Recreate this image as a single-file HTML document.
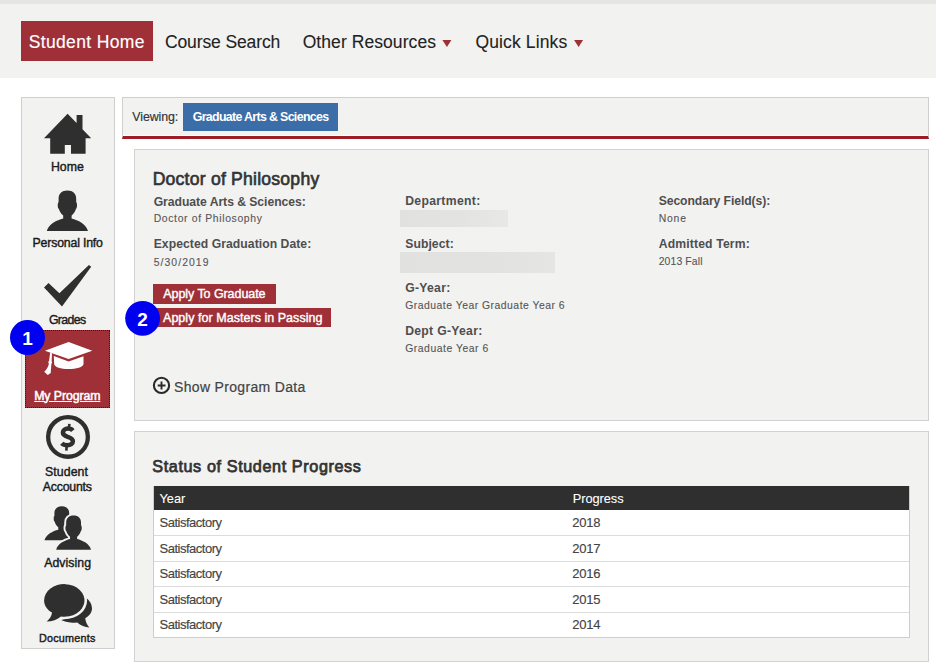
<!DOCTYPE html>
<html><head><meta charset="utf-8">
<style>
html,body{margin:0;padding:0;background:#fff;}
body{width:936px;height:668px;overflow:hidden;position:relative;font-family:"Liberation Sans",sans-serif;}
.b{position:absolute;box-sizing:border-box;}
.t{position:absolute;white-space:nowrap;}
svg{position:absolute;left:0;top:0;}
</style></head><body>
<div class="b" style="left:0;top:0;width:936px;height:4px;background:#e5e5e3"></div>
<div class="b" style="left:0;top:4px;width:936px;height:74px;background:#f2f2f1"></div>
<div class="b" style="left:21px;top:21px;width:132px;height:40px;background:#a03038"></div>

<div class="b" style="left:21px;top:97px;width:94px;height:552px;background:#f2f2f1;border:1px solid #cfcfcf"></div>
<div class="b" style="left:25px;top:330px;width:85px;height:78px;background:#a03038;outline:1px dotted #222;outline-offset:-1px"></div>

<div class="b" style="left:122px;top:97px;width:807px;height:42px;background:#f2f2f1;border:1px solid #cfcfcf;border-bottom:3px solid #9e1c26;box-shadow:inset 0 -1px 0 #fff"></div>
<div class="b" style="left:183px;top:103px;width:155px;height:28px;background:#3b6ea8"></div>

<div class="b" style="left:134px;top:149px;width:795px;height:272px;background:#f2f2f1;border:1px solid #d2d2d2"></div>
<div class="b" style="left:400px;top:210px;width:108px;height:17px;background:linear-gradient(to right,#e1e1e0,#e3e3e2 55%,#e8e8e6)"></div>
<div class="b" style="left:400px;top:252px;width:155px;height:21px;background:linear-gradient(to right,#e1e1e0,#e2e2e1 60%,#e5e5e3)"></div>
<div class="b" style="left:153px;top:284px;width:123px;height:20px;background:#a03038"></div>
<div class="b" style="left:153px;top:308px;width:178px;height:19px;background:#a03038"></div>

<div class="b" style="left:134px;top:431px;width:795px;height:231px;background:#f2f2f1;border:1px solid #d2d2d2"></div>
<div class="b" style="left:153px;top:486px;width:757px;height:152px;background:#fff;border:1px solid #cdcdcd;border-top:0"></div>
<div class="b" style="left:154px;top:486px;width:755px;height:24px;background:#2f2f2f"></div>
<div class="b" style="left:154px;top:535px;width:755px;height:1px;background:#dcdcdc"></div>
<div class="b" style="left:154px;top:561px;width:755px;height:1px;background:#dcdcdc"></div>
<div class="b" style="left:154px;top:586px;width:755px;height:1px;background:#dcdcdc"></div>
<div class="b" style="left:154px;top:612px;width:755px;height:1px;background:#dcdcdc"></div>

<svg width="936" height="668" viewBox="0 0 936 668">
<defs>
<path id="person" d="M0,0 C-5.6,0 -8.8,3.2 -8.8,8.2 L-8.8,11.6 C-9.9,11.8 -10,17.6 -8.6,18.2 C-8,20.5 -6.5,23.2 -4.2,25 L-4.2,27.8 C-10.5,29.3 -19,33.5 -20.6,40.4 L20.6,40.4 C19,33.5 10.5,29.3 4.2,27.8 L4.2,25 C6.5,23.2 8,20.5 8.6,18.2 C10,17.6 9.9,11.8 8.8,11.6 L8.8,8.2 C8.8,3.2 5.6,0 0,0 Z"/>
</defs>
<!-- nav triangles -->
<path d="M442.4,40 H451.4 L446.9,47 Z" fill="#a03038"/>
<path d="M574.1,40 H583.1 L578.6,47 Z" fill="#a03038"/>
<!-- home -->
<path d="M44,138.3 L67.6,113.8 L76.6,123.1 V115.1 H82.5 V129.2 L91.2,138.3 H85.6 V153.8 H71 V144.9 H64.8 V153.8 H50.2 V138.3 Z" fill="#2f2f2f"/>
<!-- person -->
<use href="#person" transform="translate(67.4,190.6)" fill="#2f2f2f"/>
<!-- check -->
<path d="M44,287.6 L48.5,283.1 L59.4,293.2 L88.9,265.1 L91.2,266.8 L62,306.6 Z" fill="#2f2f2f"/>
<!-- grad cap -->
<path d="M44.9,350.8 L68.6,341.9 L92.3,350.8 L68.6,359 Z" fill="#fff"/>
<path d="M53.8,355.9 L68.6,361.4 L83.5,356.3 V364 C83.5,367 76,369 68.6,369 C61,369 54.2,367 54.2,364 Z" fill="#fff"/>
<path d="M50.2,352.5 L52,353.5 L51.6,361 C52.2,361.8 52.2,363 51.5,363.6 L51.2,366 L50.7,373 L47.8,374.9 L44.2,371.8 C46.5,369.5 47.8,367.5 48.4,365.5 L48.9,363.7 C48.1,363 48.2,361.6 49,361 Z" fill="#fff"/>
<!-- dollar -->
<circle cx="68" cy="436.9" r="19.85" fill="none" stroke="#2f2f2f" stroke-width="4.3"/>
<path d="M72.8,430.6 C71.5,429 69.5,428.6 68,428.6 C65,428.6 62.9,430.3 62.9,432.6 C62.9,435 65.2,436 67.7,436.8 C70.5,437.6 72.9,438.8 72.9,441.3 C72.9,443.8 70.5,445.2 67.4,445.2 C65,445.2 63,444.5 61.8,443.2" fill="none" stroke="#2f2f2f" stroke-width="4.5"/>
<path d="M69.4,423.8 L68.8,428.8 M66.8,445 L66.3,450.7" stroke="#2f2f2f" stroke-width="2.6"/>
<!-- advising -->
<use href="#person" transform="translate(61.8,506.3) scale(0.84)" fill="#2f2f2f"/>
<use href="#person" transform="translate(73.6,515.6) scale(0.845)" fill="#f2f2f1" stroke="#f2f2f1" stroke-width="4.6"/>
<use href="#person" transform="translate(73.6,515.6) scale(0.845)" fill="#2f2f2f"/>
<!-- documents -->
<path d="M53,608.3 A19.5,14.4 0 0 1 92,608.3 C92,612.5 89.5,615.8 85.2,618.2 C85.6,621.8 87,625 89.4,627.5 C85,627.2 80.5,625.3 77.2,622.4 C75.5,622.6 74,622.7 72.5,622.7 A19.5,14.4 0 0 1 53,608.3 Z" fill="#2f2f2f"/>
<path d="M41.5,600.4 A22.8,18.9 0 1 1 64.3,619.3 C59,620.5 55,622.5 44.5,624 C48.5,620 49.3,616.5 49.6,614.5 C44.5,611.2 41.5,606 41.5,600.4 Z" fill="#f2f2f1"/>
<path d="M44.1,600.4 A20.2,16.3 0 1 1 61,616.5 C57.5,619.5 52,621.5 46.7,621.5 C49.5,619.3 51.8,616 52,612.6 C47,609.6 44.1,605.3 44.1,600.4 Z" fill="#2f2f2f"/>
<!-- blue circles -->
<circle cx="27.5" cy="337.5" r="17.5" fill="#0000f0"/>
<circle cx="142.6" cy="318.3" r="17.4" fill="#0000f0"/>
<text x="27.6" y="344.6" font-family="Liberation Sans" font-weight="bold" font-size="19" text-anchor="middle" fill="#fff">1</text>
<text x="142.6" y="325.6" font-family="Liberation Sans" font-weight="bold" font-size="19" text-anchor="middle" fill="#fff">2</text>
<!-- plus circle -->
<circle cx="161.5" cy="385.4" r="7.6" fill="none" stroke="#2a2a2a" stroke-width="2.1"/>
<path d="M157.7,385.5 H165.5 M161.5,381.5 V389.5" stroke="#2a2a2a" stroke-width="1.9"/>
</svg>
<div class="t" id="t0" style="left:28.70px;top:33.98px;font-size:17.5px;line-height:17.5px;font-weight:normal;color:#fff;letter-spacing:0.351px;-webkit-text-stroke:0.15px #fff;">Student Home</div>
<div class="t" id="t1" style="left:165.00px;top:34.08px;font-size:17.5px;line-height:17.5px;font-weight:normal;color:#222;letter-spacing:-0.124px;-webkit-text-stroke:0.1px #222;">Course Search</div>
<div class="t" id="t2" style="left:302.70px;top:33.68px;font-size:17.5px;line-height:17.5px;font-weight:normal;color:#222;letter-spacing:0.070px;-webkit-text-stroke:0.1px #222;">Other Resources</div>
<div class="t" id="t3" style="left:475.40px;top:34.08px;font-size:17.5px;line-height:17.5px;font-weight:normal;color:#222;letter-spacing:0.130px;-webkit-text-stroke:0.1px #222;">Quick Links</div>
<div class="t" id="t4" style="left:132.30px;top:111.40px;font-size:12.4px;line-height:12.4px;font-weight:normal;color:#333;letter-spacing:-0.095px;-webkit-text-stroke:0.15px #333;">Viewing:</div>
<div class="t" id="t5" style="left:192.70px;top:111.40px;font-size:12.4px;line-height:12.4px;font-weight:bold;color:#fff;letter-spacing:-0.665px;">Graduate Arts &amp; Sciences</div>
<div class="t" id="t6" style="left:50.90px;top:161.29px;font-size:12.3px;line-height:12.3px;font-weight:normal;color:#1a1a1a;letter-spacing:0.012px;-webkit-text-stroke:0.4px #1a1a1a;">Home</div>
<div class="t" id="t7" style="left:32.60px;top:237.39px;font-size:12.3px;line-height:12.3px;font-weight:normal;color:#1a1a1a;letter-spacing:-0.177px;-webkit-text-stroke:0.4px #1a1a1a;">Personal Info</div>
<div class="t" id="t8" style="left:48.90px;top:314.49px;font-size:12.3px;line-height:12.3px;font-weight:normal;color:#1a1a1a;letter-spacing:-0.635px;-webkit-text-stroke:0.4px #1a1a1a;">Grades</div>
<div class="t" id="t9" style="left:45.00px;top:465.59px;font-size:12.3px;line-height:12.3px;font-weight:normal;color:#1a1a1a;letter-spacing:0.088px;-webkit-text-stroke:0.4px #1a1a1a;">Student</div>
<div class="t" id="t10" style="left:42.80px;top:481.19px;font-size:12.3px;line-height:12.3px;font-weight:normal;color:#1a1a1a;letter-spacing:-0.205px;-webkit-text-stroke:0.4px #1a1a1a;">Accounts</div>
<div class="t" id="t11" style="left:44.20px;top:557.39px;font-size:12.3px;line-height:12.3px;font-weight:normal;color:#1a1a1a;letter-spacing:0.051px;-webkit-text-stroke:0.4px #1a1a1a;">Advising</div>
<div class="t" id="t12" style="left:34.20px;top:389.59px;font-size:12.3px;line-height:12.3px;font-weight:normal;color:#fff;letter-spacing:-0.080px;-webkit-text-stroke:0.5px #fff;text-decoration:underline;">My Program</div>
<div class="t" id="t13" style="left:39.00px;top:633.46px;font-size:10.8px;line-height:10.8px;font-weight:normal;color:#1a1a1a;letter-spacing:0.224px;-webkit-text-stroke:0.4px #1a1a1a;">Documents</div>
<div class="t" id="t14" style="left:152.65px;top:171.30px;font-size:17.6px;line-height:17.6px;font-weight:normal;color:#333;letter-spacing:0.221px;-webkit-text-stroke:0.65px #333;">Doctor of Philosophy</div>
<div class="t" id="t15" style="left:153.70px;top:196.47px;font-size:12.2px;line-height:12.2px;font-weight:bold;color:#4e4e4e;letter-spacing:-0.050px;">Graduate Arts &amp; Sciences:</div>
<div class="t" id="t16" style="left:153.70px;top:237.97px;font-size:12.2px;line-height:12.2px;font-weight:bold;color:#4e4e4e;letter-spacing:0.047px;">Expected Graduation Date:</div>
<div class="t" id="t17" style="left:405.20px;top:194.67px;font-size:12.2px;line-height:12.2px;font-weight:bold;color:#4e4e4e;letter-spacing:0.328px;">Department:</div>
<div class="t" id="t18" style="left:405.20px;top:237.67px;font-size:12.2px;line-height:12.2px;font-weight:bold;color:#4e4e4e;letter-spacing:0.069px;">Subject:</div>
<div class="t" id="t19" style="left:405.20px;top:282.17px;font-size:12.2px;line-height:12.2px;font-weight:bold;color:#4e4e4e;letter-spacing:0.284px;">G-Year:</div>
<div class="t" id="t20" style="left:405.20px;top:324.67px;font-size:12.2px;line-height:12.2px;font-weight:bold;color:#4e4e4e;letter-spacing:0.294px;">Dept G-Year:</div>
<div class="t" id="t21" style="left:658.70px;top:194.67px;font-size:12.2px;line-height:12.2px;font-weight:bold;color:#4e4e4e;letter-spacing:-0.085px;">Secondary Field(s):</div>
<div class="t" id="t22" style="left:658.70px;top:237.67px;font-size:12.2px;line-height:12.2px;font-weight:bold;color:#4e4e4e;letter-spacing:0.147px;">Admitted Term:</div>
<div class="t" id="t23" style="left:153.70px;top:213.59px;font-size:10.4px;line-height:10.4px;font-weight:normal;color:#555;letter-spacing:0.648px;-webkit-text-stroke:0.1px #555;">Doctor of Philosophy</div>
<div class="t" id="t24" style="left:153.70px;top:257.79px;font-size:10.4px;line-height:10.4px;font-weight:normal;color:#555;letter-spacing:1.069px;-webkit-text-stroke:0.1px #555;">5/30/2019</div>
<div class="t" id="t25" style="left:405.20px;top:300.79px;font-size:10.4px;line-height:10.4px;font-weight:normal;color:#555;letter-spacing:0.494px;-webkit-text-stroke:0.1px #555;">Graduate Year Graduate Year 6</div>
<div class="t" id="t26" style="left:405.20px;top:344.09px;font-size:10.4px;line-height:10.4px;font-weight:normal;color:#555;letter-spacing:0.529px;-webkit-text-stroke:0.1px #555;">Graduate Year 6</div>
<div class="t" id="t27" style="left:658.70px;top:213.89px;font-size:10.4px;line-height:10.4px;font-weight:normal;color:#555;letter-spacing:0.813px;-webkit-text-stroke:0.1px #555;">None</div>
<div class="t" id="t28" style="left:658.70px;top:257.19px;font-size:10.4px;line-height:10.4px;font-weight:normal;color:#555;letter-spacing:0.133px;-webkit-text-stroke:0.1px #555;">2013 Fall</div>
<div class="t" id="t29" style="left:163.30px;top:288.12px;font-size:12.5px;line-height:12.5px;font-weight:normal;color:#fff;letter-spacing:-0.068px;-webkit-text-stroke:0.4px #fff;">Apply To Graduate</div>
<div class="t" id="t30" style="left:163.00px;top:311.92px;font-size:12.5px;line-height:12.5px;font-weight:normal;color:#fff;letter-spacing:0.039px;-webkit-text-stroke:0.4px #fff;">Apply for Masters in Passing</div>
<div class="t" id="t31" style="left:174.00px;top:379.85px;font-size:14px;line-height:14px;font-weight:normal;color:#444;letter-spacing:0.327px;-webkit-text-stroke:0.2px #444;">Show Program Data</div>
<div class="t" id="t32" style="left:152.30px;top:457.88px;font-size:16.2px;line-height:16.2px;font-weight:normal;color:#333;letter-spacing:0.605px;-webkit-text-stroke:0.75px #333;">Status of Student Progress</div>
<div class="t" id="t33" style="left:159.50px;top:493.26px;font-size:12.8px;line-height:12.8px;font-weight:normal;color:#fff;letter-spacing:0.000px;-webkit-text-stroke:0.1px #fff;">Year</div>
<div class="t" id="t34" style="left:572.70px;top:493.46px;font-size:12.8px;line-height:12.8px;font-weight:normal;color:#fff;letter-spacing:-0.044px;-webkit-text-stroke:0.1px #fff;">Progress</div>
<div class="t" id="t35" style="left:159.50px;top:515.69px;font-size:13px;line-height:13px;font-weight:normal;color:#444;letter-spacing:-0.492px;-webkit-text-stroke:0.15px #444;">Satisfactory</div>
<div class="t" id="t36" style="left:572.20px;top:515.69px;font-size:13px;line-height:13px;font-weight:normal;color:#444;letter-spacing:-0.230px;-webkit-text-stroke:0.15px #444;">2018</div>
<div class="t" id="t37" style="left:159.50px;top:542.09px;font-size:13px;line-height:13px;font-weight:normal;color:#444;letter-spacing:-0.492px;-webkit-text-stroke:0.15px #444;">Satisfactory</div>
<div class="t" id="t38" style="left:572.20px;top:542.09px;font-size:13px;line-height:13px;font-weight:normal;color:#444;letter-spacing:-0.230px;-webkit-text-stroke:0.15px #444;">2017</div>
<div class="t" id="t39" style="left:159.50px;top:566.59px;font-size:13px;line-height:13px;font-weight:normal;color:#444;letter-spacing:-0.492px;-webkit-text-stroke:0.15px #444;">Satisfactory</div>
<div class="t" id="t40" style="left:572.20px;top:566.59px;font-size:13px;line-height:13px;font-weight:normal;color:#444;letter-spacing:-0.230px;-webkit-text-stroke:0.15px #444;">2016</div>
<div class="t" id="t41" style="left:159.50px;top:593.09px;font-size:13px;line-height:13px;font-weight:normal;color:#444;letter-spacing:-0.492px;-webkit-text-stroke:0.15px #444;">Satisfactory</div>
<div class="t" id="t42" style="left:572.20px;top:593.09px;font-size:13px;line-height:13px;font-weight:normal;color:#444;letter-spacing:-0.230px;-webkit-text-stroke:0.15px #444;">2015</div>
<div class="t" id="t43" style="left:159.50px;top:617.59px;font-size:13px;line-height:13px;font-weight:normal;color:#444;letter-spacing:-0.492px;-webkit-text-stroke:0.15px #444;">Satisfactory</div>
<div class="t" id="t44" style="left:572.20px;top:617.59px;font-size:13px;line-height:13px;font-weight:normal;color:#444;letter-spacing:-0.230px;-webkit-text-stroke:0.15px #444;">2014</div>
</body></html>
